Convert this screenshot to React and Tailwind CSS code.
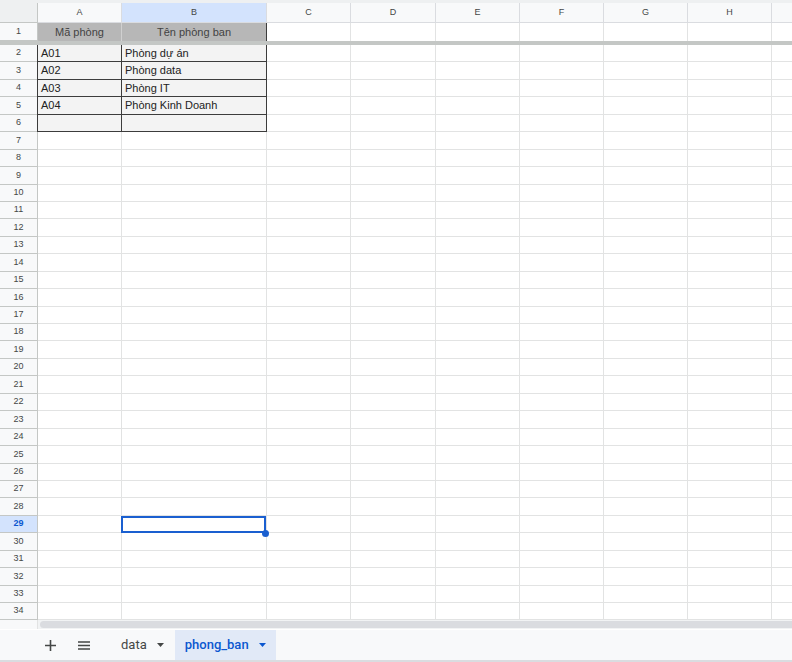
import { useState } from "react";

const colWidths = "grid-cols-[38px_84px_145px_84px_85px_84px_84px_84px_84px_84px]";
const letters = ["A", "B", "C", "D", "E", "F", "G", "H", "I"];

const tableData = {
  2: ["A01", "Phòng dự án"],
  3: ["A02", "Phòng data"],
  4: ["A03", "Phòng IT"],
  5: ["A04", "Phòng Kinh Doanh"],
  6: ["", ""],
};

const Caret = ({ color }) => (
  <svg width="7" height="4" viewBox="0 0 7 4" className="ml-[10px]">
    <polygon points="0,0 7,0 3.5,4" fill={color} />
  </svg>
);

const HeaderRow = () => (
  <div className={`grid ${colWidths} h-[20px]`}>
    <div className="border-r border-b border-[#c4c7c5] bg-[#eef0f1]" />
    {letters.map((l) => (
      <div
        key={l}
        className={`flex items-center justify-center border-r border-b border-[#dadce0] text-[9px] text-[#444746] ${
          l === "B" ? "bg-[#d3e3fd]" : "bg-[#f8f9fa]"
        }`}
      >
        {/* column I is off screen, its letter is not visible */}
        {l === "I" ? "" : l}
      </div>
    ))}
  </div>
);

const RowNumber = ({ n, active }) => (
  <div
    className={`flex items-center justify-center border-r border-b border-[#c4c7c5] text-[9px] ${
      active ? "bg-[#d3e3fd] font-bold text-[#0b57d0]" : "bg-[#f8f9fa] text-[#444746]"
    }`}
  >
    {n}
  </div>
);

const FirstRow = () => (
  <div className={`grid ${colWidths} h-[18px]`}>
    <RowNumber n={1} />
    <div className="flex items-center justify-center border-r border-[#d0d0d0] bg-[#b7b7b7] text-[11px] text-[#434343]">
      Mã phòng
    </div>
    <div className="flex items-center justify-center border-r border-[#3c3c3c] bg-[#b7b7b7] text-[11px] text-[#434343]">
      Tên phòng ban
    </div>
    {letters.slice(2).map((l) => (
      <div key={l} className="border-r border-[#e2e3e3]" />
    ))}
  </div>
);

const DataRow = ({ n, selected }) => {
  const values = tableData[n];
  return (
    <div className={`grid ${colWidths} h-[17.45px]`}>
      <RowNumber n={n} active={selected} />
      {letters.map((l, i) => {
        if (values && i < 2) {
          return (
            <div
              key={l}
              className={`flex items-center overflow-hidden whitespace-nowrap border-r border-b border-[#3c3c3c] bg-[#f3f3f3] pl-[3px] text-[11px] text-[#222] ${
                i === 0 ? "-ml-[1px] border-l" : ""
              }`}
            >
              {values[i]}
            </div>
          );
        }
        const isSel = selected && l === "B";
        return (
          <div key={l} className="relative border-r border-b border-[#e2e3e3]">
            {isSel && (
              <>
                <div className="absolute -left-[1px] right-0 top-0 -bottom-[1px] z-10 border-2 border-[#1a5fd0]" />
                <div className="absolute -right-[3px] -bottom-[5px] z-20 h-[7px] w-[7px] rounded-full bg-[#1a5fd0]" />
              </>
            )}
          </div>
        );
      })}
    </div>
  );
};

export default function App() {
  const [activeSheet, setActiveSheet] = useState("phong_ban");
  const rows = [];
  for (let n = 2; n <= 34; n++) rows.push(n);

  return (
    <div className="flex h-[662px] w-[792px] flex-col overflow-hidden bg-white font-['Liberation_Sans',Arial,sans-serif]">
      <div className="h-[3px] bg-[#eef0f1]" />
      <HeaderRow />
      <FirstRow />
      <div className="h-[4px] bg-[#c4c7c5]" />
      <div className="flex flex-col">
        {rows.map((n) => (
          <DataRow key={n} n={n} selected={n === 29} />
        ))}
      </div>

      {/* horizontal scrollbar */}
      <div className="flex h-[9px] bg-white">
        <div className="w-[38px] border-r border-[#e2e3e3] bg-[#f8f9fa]" />
        <div className="flex flex-1 items-start bg-[#f1f3f4] pl-[2px] pt-[1px]">
          <div className="h-[7px] flex-1 rounded-l-full bg-[#dadce0]" />
        </div>
      </div>

      {/* sheet tabs */}
      <div className="flex flex-1 items-stretch border-t border-white border-b-2 border-b-[#dadce0] bg-[#f8f9fa] font-['Roboto',sans-serif] text-[13px]">
        <button className="ml-[44px] flex w-[12px] items-center justify-center">
          <svg width="11" height="11" viewBox="0 0 11 11">
            <path d="M5.5 0v11M0 5.5h11" stroke="#444746" strokeWidth="1.6" />
          </svg>
        </button>
        <button className="ml-[22px] flex w-[12px] items-center justify-center">
          <svg width="12" height="9" viewBox="0 0 12 9">
            <path d="M0 1h12M0 4.5h12M0 8h12" stroke="#444746" strokeWidth="1.4" />
          </svg>
        </button>
        <button
          onClick={() => setActiveSheet("data")}
          className={`ml-[23px] flex items-center pl-[8px] pr-[11px] ${
            activeSheet === "data" ? "bg-[#e1e9f7] font-medium text-[#0b57d0]" : "text-[#444746]"
          }`}
        >
          data
          <Caret color={activeSheet === "data" ? "#0b57d0" : "#444746"} />
        </button>
        <button
          onClick={() => setActiveSheet("phong_ban")}
          className={`flex w-[101px] items-center pl-[10px] ${
            activeSheet === "phong_ban" ? "bg-[#e1e9f7] font-medium text-[#0b57d0]" : "text-[#444746]"
          }`}
        >
          phong_ban
          <Caret color={activeSheet === "phong_ban" ? "#0b57d0" : "#444746"} />
        </button>
      </div>
    </div>
  );
}
